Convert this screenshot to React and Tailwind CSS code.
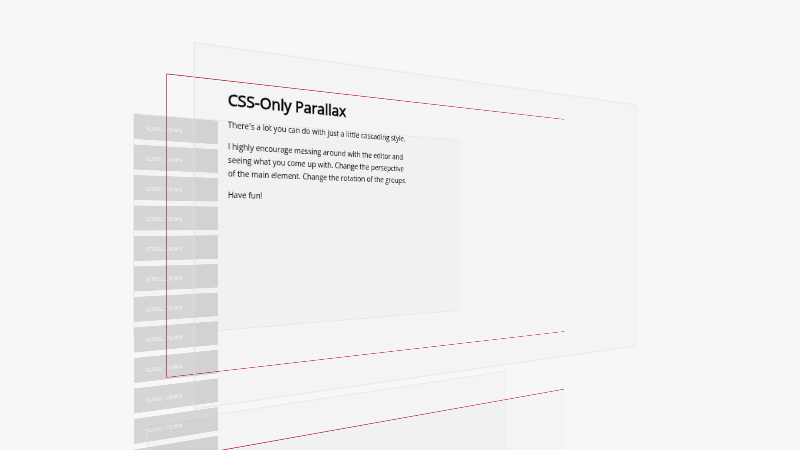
import { useRef } from "react";
import clsx from "clsx";

const BUTTON_COUNT = 12;

// every layer of a group shares one grid cell and is pushed apart on the z axis
function Layer({ depth, className, children }) {
  return (
    <div className={clsx("col-start-1 row-start-1 min-w-0 min-h-0", depth, className)}>
      {children}
    </div>
  );
}

function Group({ ref, children }) {
  return (
    <section
      ref={ref}
      className="grid grid-cols-1 grid-rows-1 w-full h-screen shrink-0 [transform-style:preserve-3d] [transform:translate3d(1px,1px,-500px)_rotateY(30deg)]"
    >
      {children}
    </section>
  );
}

const PANE = "border-2 border-[#dfdfdf]/50 bg-black/[0.013]";
const FRAME = "border-y border-l border-[#b80f18]";

export default function App() {
  const nextGroup = useRef(null);

  function scrollDown() {
    nextGroup.current?.scrollIntoView({ behavior: "smooth" });
  }

  return (
    <main className="flex flex-col gap-[121px] h-screen overflow-hidden bg-[#f7f7f7] font-['Open_Sans','Noto_Sans',sans-serif] text-black [perspective:627px]">
      <Group>
        <Layer depth="[transform:translateZ(-376px)]" className={PANE}>
          <div className="flex flex-col items-start gap-[11px]">
            {Array.from({ length: BUTTON_COUNT }, (_, i) => (
              <button
                key={i}
                onClick={scrollDown}
                className="w-[166px] h-[50px] shrink-0 px-[22px] pt-1 bg-[#d5d5d5] text-left text-[10px] text-white/80 uppercase"
              >
                Scroll down
              </button>
            ))}
          </div>
        </Layer>

        <Layer depth="[transform:translateZ(0px)]" className={clsx(FRAME, "pointer-events-none")} />

        <Layer
          depth="[transform:translateZ(186px)]"
          className={clsx(PANE, "pointer-events-none pl-10 pt-12")}
        >
          <h1 className="mb-1.5 text-xl leading-[34px] font-normal [-webkit-text-stroke:0.8px]">CSS-Only Parallax</h1>
          <div className="w-[264px] space-y-2.5 text-[10px] leading-[17px]">
            <p>There's a lot you can do with just a little cascading style.</p>
            <p>
              I highly encourage messing around with the editor and seeing what you come up with.
              Change the persepctive of the main element. Change the rotation of the groups.
            </p>
            <p>Have fun!</p>
          </div>
        </Layer>
      </Group>

      <Group ref={nextGroup}>
        <Layer depth="[transform:translateZ(-190px)]" className={PANE} />
        <Layer depth="[transform:translateZ(0px)]" className={clsx(FRAME, "bg-black/[0.013]")} />
      </Group>
    </main>
  );
}
